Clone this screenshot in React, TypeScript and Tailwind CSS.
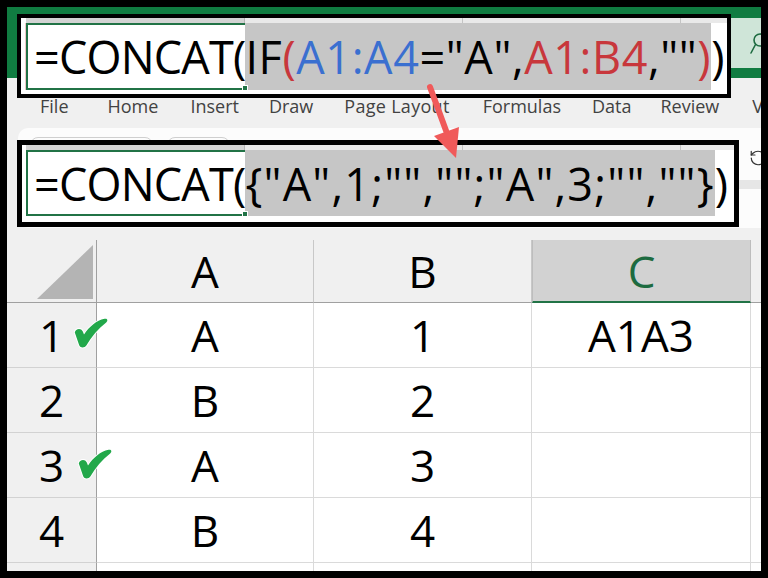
import { RotateCcw } from 'lucide-react';

const TABS = [
  { label: 'File', cls: 'ml-[33px]' },
  { label: 'Home', cls: 'ml-[39px]' },
  { label: 'Insert', cls: 'ml-[32px]' },
  { label: 'Draw', cls: 'ml-[30px]' },
  { label: 'Page Layout', cls: 'ml-[31px] tracking-[0.3px]' },
  { label: 'Formulas', cls: 'ml-[33px]' },
  { label: 'Data', cls: 'ml-[31px]' },
  { label: 'Review', cls: 'ml-[29px]' },
  { label: 'View', cls: 'ml-[33px]' },
];

const ROWS = [
  { n: '1', a: 'A', b: '1', c: 'A1A3', check: 'left-[67px] top-[15px]' },
  { n: '2', a: 'B', b: '2', c: '' },
  { n: '3', a: 'A', b: '3', c: '', check: 'left-[71px] top-[16px]' },
  { n: '4', a: 'B', b: '4', c: '' },
];

const RED = 'text-[#c8373c]';
const BLUE = 'text-[#3a6fd0]';

function Check({ className }: { className: string }) {
  return (
    <svg viewBox="0 0 35 31" className={`absolute z-10 w-[35px] h-[31px] ${className}`}>
      <path
        d="M0.8 14.5 C1.5 10.5 7 9.5 8.8 13.5 L10 16.5 C15.5 8.5 22.5 2.5 30.5 0.8 C33.5 0.2 34.2 2.8 32.2 4.4 C24 10.5 17.5 18.5 12.5 27.2 C10.5 30.2 6.5 30.2 5.2 27.2 Z"
        fill="#22a84a"
        stroke="#fff"
        strokeWidth="2"
        paintOrder="stroke"
        strokeLinejoin="round"
      />
    </svg>
  );
}

function Strip({ lead }: { lead: string }) {
  return (
    <div className="flex h-[5px] shrink-0">
      <div className={lead} />
      <div className="w-[219px] bg-[#d3d3d3] border-r border-[#b5b5b5]" />
      <div className="w-[218px] bg-[#e9e9e9] border-r border-[#c4c4c4]" />
      <div className="w-[218px] bg-[#e9e9e9] border-r border-[#c4c4c4]" />
      <div className="flex-1 bg-[#e9e9e9]" />
    </div>
  );
}

function FormulaCell() {
  return (
    <div className="relative flex items-center border-y-2 border-l-2 border-[#217346] pl-[6px] tracking-[-0.8px]">
      =CONCAT(
      <span className="absolute -right-[3px] -bottom-[3px] w-[6px] h-[6px] bg-[#217346] border border-white" />
    </div>
  );
}

export default function App() {
  return (
    <div className="relative w-[768px] h-[578px] bg-black p-[7px] font-['Open_Sans',sans-serif] text-black">
      <div className="w-full h-full bg-[#f0f0f0] flex flex-col overflow-hidden">
        {/* title bar */}
        <div className="h-[71px] shrink-0 bg-[#107c41] flex items-center justify-end">
          <div className="w-[30px] h-[50px] bg-[#cfe5d8]">
            <svg viewBox="0 0 30 50" className="w-[30px] h-[50px]">
              <circle cx="29" cy="22" r="6" fill="none" stroke="#1d6b40" strokeWidth="1.6" />
              <line x1="24.5" y1="26.5" x2="20" y2="35" stroke="#1d6b40" strokeWidth="1.6" strokeLinecap="round" />
            </svg>
          </div>
        </div>

        {/* ribbon tabs */}
        <div className="h-[50px] shrink-0 flex items-start pt-[16px] text-[18px] leading-[24px] text-[#424242] whitespace-nowrap">
          {TABS.map((t) => (
            <span key={t.label} className={t.cls}>
              {t.label}
            </span>
          ))}
        </div>

        {/* toolbar */}
        <div className="h-[100px] shrink-0 ml-[11px] bg-[#fcfcfc] rounded-l-[10px] flex">
          <div className="mt-[9px] ml-[12px] w-[123px] h-[40px] rounded-[8px] border border-[#cfcfcf]" />
          <div className="mt-[9px] ml-[14px] w-[63px] h-[40px] rounded-[8px] border border-[#cfcfcf]" />
          <div className="ml-auto flex flex-col items-end">
            <RotateCcw size={18} strokeWidth={1.6} className="mt-[21px] -mr-[6px] text-[#333]" />
            <div className="mt-[13px] w-[22px] h-[9px] bg-[#e6e6e6]" />
          </div>
        </div>

        <div className="h-[12px] shrink-0" />

        {/* sheet */}
        <div className="grid grid-cols-[90px_217px_218px_219px_10px] grid-rows-[63px_65px_65px_65px_65px_8px] text-[44px] leading-none">
          <div className="bg-[#f0f0f0] border-r border-b border-[#a0a0a0]">
            <svg viewBox="0 0 90 63" className="w-[90px] h-[63px]">
              <polygon points="30,59 86,5 86,59" fill="#b4b4b4" />
            </svg>
          </div>
          <div className="bg-[#f0f0f0] border-r border-[#c8c8c8] border-b border-b-[#a0a0a0] flex items-center justify-center">A</div>
          <div className="bg-[#f0f0f0] border-r border-[#c8c8c8] border-b border-b-[#a0a0a0] flex items-center justify-center">B</div>
          <div className="bg-[#d2d2d2] border-x border-[#bdbdbd] border-b-2 border-b-[#217346] flex items-center justify-center text-[#1d6b40]">C</div>
          <div className="bg-[#f0f0f0] border-b border-[#a0a0a0]" />

          {ROWS.map((r) => (
            <div key={r.n} className="contents">
              <div className="relative bg-[#f0f0f0] border-r border-[#a0a0a0] border-b border-b-[#d2d2d2] flex items-center justify-center">
                {r.n}
                {r.check && <Check className={r.check} />}
              </div>
              <div className="bg-white border-r border-b border-[#dadada] flex items-center justify-center">{r.a}</div>
              <div className="bg-white border-r border-b border-[#dadada] flex items-center justify-center">{r.b}</div>
              <div className="bg-white border-r border-b border-[#dadada] flex items-center justify-center">{r.c}</div>
              <div className="bg-white border-b border-[#dadada]" />
            </div>
          ))}

          <div className="bg-[#f0f0f0] border-r border-[#a0a0a0]" />
          <div className="bg-white border-r border-[#dadada]" />
          <div className="bg-white border-r border-[#dadada]" />
          <div className="bg-white border-r border-[#dadada]" />
          <div className="bg-white" />
        </div>
      </div>

      {/* formula box 1 */}
      <div className="absolute left-[17px] top-[14px] w-[714px] h-[84px] border-4 border-black bg-white flex flex-col text-[45px] leading-none">
        <Strip lead="w-[5px] bg-white" />
        <div className="flex h-[67px] shrink-0">
          <div className="w-[4px]" />
          <div className="w-[1px] bg-[#eec7c7]" />
          <FormulaCell />
          <div className="flex items-center bg-[#c6c6c6] tracking-[0.6px]">
            IF<span className={RED}>(</span>
            <span className={BLUE}>A1:A4</span>="A",<span className={RED}>A1:B4</span>,""
            <span className={RED}>)</span>
          </div>
          <div className="flex items-center">)</div>
        </div>
      </div>

      {/* formula box 2 */}
      <div className="absolute left-[17px] top-[140px] w-[722px] h-[87px] border-[5px] border-black bg-white flex flex-col text-[45px] leading-none">
        <Strip lead="w-[4px] bg-white" />
        <div className="flex h-[66px] shrink-0 pl-[4px]">
          <FormulaCell />
          <div className="flex items-center bg-[#c6c6c6] tracking-[1.2px]">{'{"A",1;"","";"A",3;"",""}'}</div>
          <div className="flex items-center">)</div>
        </div>
      </div>

      {/* arrow */}
      <svg className="absolute left-0 top-0 w-[768px] h-[578px] pointer-events-none" viewBox="0 0 768 578">
        <line x1="430" y1="87" x2="448" y2="136" stroke="#f05a5a" strokeWidth="6" strokeLinecap="round" />
        <polygon points="456,158 434,136 459,127" fill="#f05a5a" />
      </svg>
    </div>
  );
}
